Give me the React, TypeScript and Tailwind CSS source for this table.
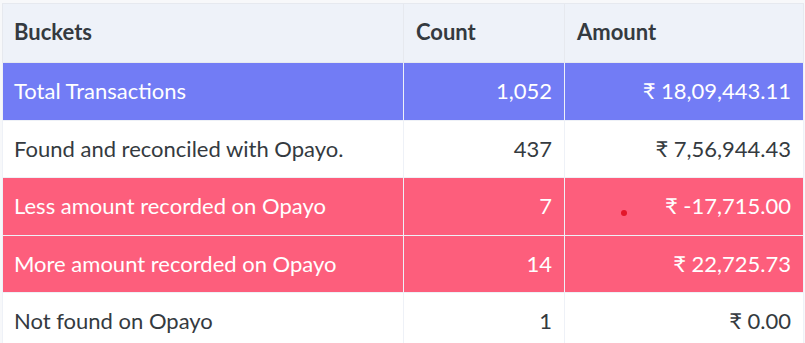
import React from "react";

type Row = {
  bucket: string;
  count: string;
  amount: string;
  tone: "blue" | "red" | "plain";
  dot?: boolean;
};

const rows: Row[] = [
  { bucket: "Total Transactions", count: "1,052", amount: "₹ 18,09,443.11", tone: "blue" },
  { bucket: "Found and reconciled with Opayo.", count: "437", amount: "₹ 7,56,944.43", tone: "plain" },
  { bucket: "Less amount recorded on Opayo", count: "7", amount: "₹ -17,715.00", tone: "red", dot: true },
  { bucket: "More amount recorded on Opayo", count: "14", amount: "₹ 22,725.73", tone: "red" },
  { bucket: "Not found on Opayo", count: "1", amount: "₹ 0.00", tone: "plain" },
];

const toneClass = {
  blue: "bg-[#727cf5] text-white",
  red: "bg-[#fd5e7c] text-white",
  plain: "bg-white text-[#343a40]",
};

export default function App() {
  return (
    <div className="min-h-screen bg-[#f7f8fa] pl-[2px] pt-[3px] font-['Lato','Open_Sans',sans-serif]">
      <table className="w-[801px] table-fixed border-collapse text-[22px]">
        <colgroup>
          <col className="w-[401px]" />
          <col className="w-[161px]" />
          <col className="w-[239px]" />
        </colgroup>
        <thead>
          <tr className="h-[59px] bg-[#eef2f9] text-[#343a40]">
            <th className="border border-[#e6e9ef] pb-[3px] pl-[11px] pr-3 text-left font-bold">Buckets</th>
            <th className="border border-[#e6e9ef] pb-[3px] pl-[12px] pr-3 text-left font-bold">Count</th>
            <th className="border border-[#e6e9ef] pb-[3px] pl-[12px] pr-3 text-left font-bold">Amount</th>
          </tr>
        </thead>
        <tbody>
          {rows.map((r) => (
            <tr key={r.bucket} className={`h-[57.5px] ${toneClass[r.tone]}`}>
              <td className="border border-[#eef1f7] pb-[1px] pl-[11px] pr-3">{r.bucket}</td>
              <td className="border border-[#eef1f7] pb-[1px] px-3 text-right">{r.count}</td>
              <td className="relative border border-[#eef1f7] pb-[1px] px-3 text-right">
                {r.dot && (
                  <span className="absolute left-[56px] top-[32px] size-[6px] rounded-full bg-[#e3172b]" />
                )}
                {r.amount}
              </td>
            </tr>
          ))}
        </tbody>
      </table>
    </div>
  );
}
